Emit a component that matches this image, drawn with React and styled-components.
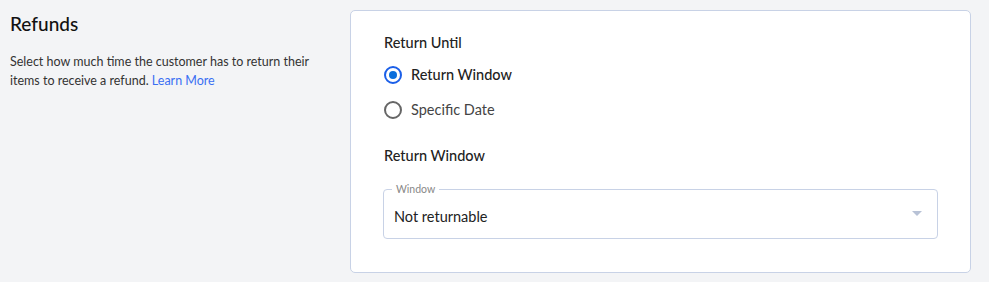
import styled, { createGlobalStyle } from "styled-components";

const GlobalStyle = createGlobalStyle`
  html, body {
    margin: 0;
    background: #f3f4f6;
    font-family: Lato, "Open Sans", sans-serif;
    color: #222;
  }
`;

const Page = styled.div`
  display: grid;
  grid-template-columns: 340px 621px;
  padding: 10px 18px 10px 10px;
  align-items: start;
`;

const Intro = styled.div`
  padding-top: 2px;
`;

const Title = styled.h2`
  margin: 0;
  font-size: 19px;
  font-weight: 500;
  color: #111;
  line-height: 24px;
`;

const Description = styled.p`
  margin: 16px 0 0;
  font-size: 12.5px;
  line-height: 19px;
  color: #333;
  max-width: 312px;
`;

const Link = styled.a`
  color: #3a6ff3;
  text-decoration: none;
`;

const Card = styled.div`
  background: #fff;
  border: 1px solid #c8d2e6;
  border-radius: 5px;
  padding: 23px 32px 32px;
  box-sizing: border-box;
  height: 263px;
`;

const SectionLabel = styled.div`
  font-size: 14.5px;
  font-weight: 500;
  color: #222;
  line-height: 18px;
  padding-left: 1px;
  margin-bottom: ${({ $gap }) => $gap || 0}px;
`;

const RadioGroup = styled.div`
  display: flex;
  flex-direction: column;
  gap: 17px;
  margin: 14px 0 28px 1px;
`;

const RadioRow = styled.label`
  display: flex;
  align-items: center;
  gap: 9px;
  font-size: 14.5px;
  line-height: 18px;
  color: ${({ $checked }) => ($checked ? "#222" : "#444")};
  font-weight: ${({ $checked }) => ($checked ? 500 : 400)};
`;

const RadioCircle = styled.span`
  width: 18px;
  height: 18px;
  box-sizing: border-box;
  border-radius: 50%;
  border: 2px solid ${({ $checked }) => ($checked ? "#1b5fe8" : "#666")};
  display: flex;
  align-items: center;
  justify-content: center;
  &::after {
    content: "";
    width: 8px;
    height: 8px;
    border-radius: 50%;
    background: ${({ $checked }) => ($checked ? "#0b6fdc" : "transparent")};
  }
`;

const Field = styled.fieldset`
  margin: 0;
  border: 1px solid #c8d2e6;
  border-radius: 4px;
  height: 56px;
  box-sizing: border-box;
  padding: 0 10px;
  display: flex;
  align-items: center;
  justify-content: space-between;
`;

const Legend = styled.legend`
  font-size: 10.5px;
  color: #888;
  padding: 0 4px;
  margin-left: -2px;
  line-height: 12px;
`;

const Value = styled.span`
  font-size: 14.5px;
  color: #222;
`;

const Caret = styled.span`
  width: 0;
  height: 0;
  border-left: 5px solid transparent;
  border-right: 5px solid transparent;
  border-top: 5px solid #b8c2d6;
  margin-top: -6px;
  margin-right: 5px;
`;

const options = [
  { label: "Return Window", checked: true },
  { label: "Specific Date", checked: false },
];

export default function App() {
  return (
    <>
      <GlobalStyle />
      <Page>
        <Intro>
          <Title>Refunds</Title>
          <Description>
            Select how much time the customer has to return their items to
            receive a refund. <Link href="#">Learn More</Link>
          </Description>
        </Intro>
        <Card>
          <SectionLabel>Return Until</SectionLabel>
          <RadioGroup>
            {options.map((o) => (
              <RadioRow key={o.label} $checked={o.checked}>
                <RadioCircle $checked={o.checked} />
                {o.label}
              </RadioRow>
            ))}
          </RadioGroup>
          <SectionLabel $gap={18}>Return Window</SectionLabel>
          <Field>
            <Legend>Window</Legend>
            <Value>Not returnable</Value>
            <Caret />
          </Field>
        </Card>
      </Page>
    </>
  );
}
